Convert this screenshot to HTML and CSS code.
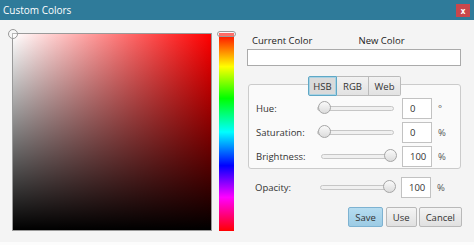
FILE: index.html
```html
<!DOCTYPE html>
<html lang="en">
<head>
  <meta charset="UTF-8" />
  <title>Custom Colors</title>
  <link rel="stylesheet" href="styles.css">
</head>
<body>
  <div class="dialog">
    <div class="titlebar">
      <span class="title">Custom Colors</span>
      <button class="close-btn">x</button>
    </div>

    <div class="content">
      <div class="picker">
        <div class="sv-area">
          <span class="sv-handle"></span>
        </div>
        <div class="hue-bar">
          <span class="hue-handle"></span>
        </div>
      </div>

      <div class="controls">
        <div class="swatch-labels">
          <span>Current Color</span>
          <span>New Color</span>
        </div>
        <div class="swatch-box"></div>

        <div class="group">
          <div class="tabs">
            <button class="tab active">HSB</button>
            <button class="tab">RGB</button>
            <button class="tab">Web</button>
          </div>

          <div class="row">
            <span class="row-label">Hue:</span>
            <div class="slider"><span class="thumb at-min"></span></div>
            <input class="field" type="text" value="0">
            <span class="unit">°</span>
          </div>
          <div class="row">
            <span class="row-label">Saturation:</span>
            <div class="slider"><span class="thumb at-min"></span></div>
            <input class="field" type="text" value="0">
            <span class="unit">%</span>
          </div>
          <div class="row">
            <span class="row-label">Brightness:</span>
            <div class="slider short"><span class="thumb at-max"></span></div>
            <input class="field" type="text" value="100">
            <span class="unit">%</span>
          </div>
        </div>

        <div class="row opacity-row">
          <span class="row-label">Opacity:</span>
          <div class="slider short"><span class="thumb at-max"></span></div>
          <input class="field" type="text" value="100">
          <span class="unit">%</span>
        </div>

        <div class="buttons">
          <button class="btn primary">Save</button>
          <button class="btn">Use</button>
          <button class="btn">Cancel</button>
        </div>
      </div>
    </div>
  </div>
</body>
</html>
```

FILE: styles.css
```css
body {
  margin: 0;
  background: #fcfcfc;
  font-family: 'Open Sans', 'Noto Sans', sans-serif;
  color: #333;
}

.dialog {
  width: 474px;
  height: 242px;
  background: #f4f4f4;
  display: flex;
  flex-direction: column;
}

.titlebar {
  height: 20px;
  background: #2f7b9a;
  display: flex;
  align-items: center;
  justify-content: space-between;
  padding: 0 4px 0 3px;
}

.title {
  color: #fff;
  font-size: 10px;
}

.close-btn {
  width: 14px;
  height: 13px;
  margin-top: 1px;
  padding: 0;
  border: none;
  background: #c9474c;
  color: #fff;
  font-family: inherit;
  font-size: 8px;
  font-weight: bold;
  line-height: 12px;
}

.content {
  display: flex;
  padding: 13px 0 0 12px;
}

.picker {
  display: flex;
}

.sv-area {
  position: relative;
  width: 198px;
  height: 196px;
  border: 1px solid #9a9a9a;
  background:
    linear-gradient(to bottom, rgba(0,0,0,0), #000),
    linear-gradient(to right, #fff, #f00);
}

.sv-handle {
  position: absolute;
  left: -5px;
  top: -5px;
  width: 8px;
  height: 8px;
  border: 1px solid #999;
  border-radius: 50%;
  background: rgba(255,255,255,0.3);
}

.hue-bar {
  position: relative;
  width: 15px;
  height: 198px;
  margin-left: 7px;
  background: linear-gradient(to bottom, #f00, #ff0 17%, #0f0 33%, #0ff 50%, #00f 67%, #f0f 83%, #f00);
}

.hue-handle {
  position: absolute;
  left: -2px;
  top: -2px;
  width: 17px;
  height: 4px;
  border: 1px solid #999;
  border-radius: 3px;
  background: rgba(255,255,255,0.4);
}

.controls {
  width: 214px;
  margin-left: 13px;
  font-size: 9.5px;
}

.swatch-labels {
  display: flex;
  height: 16px;
  line-height: 16px;
  color: #222;
}

.swatch-labels span {
  width: 50%;
  padding-left: 5px;
}

.swatch-labels span + span {
  padding-left: 4px;
}

.swatch-box {
  height: 15px;
  border: 1px solid #aaa;
  background: #fff;
}

.group {
  margin-top: 18px;
  margin-left: 1px;
  height: 83px;
  border: 1px solid #cbcbcb;
  border-radius: 3px;
  background: #fafafa;
  padding: 0 0 0 7px;
}

.tabs {
  display: flex;
  justify-content: center;
  margin: -9px 0 2px -7px;
}

.tab {
  height: 20px;
  padding: 0;
  border: 1px solid #bbb;
  border-left: none;
  background: linear-gradient(#f2f2f2, #e2e2e2);
  font-family: inherit;
  font-size: 9.5px;
  color: #333;
  width: 32px;
}

.tab:first-child {
  border-left: 1px solid #bbb;
  border-radius: 2px 0 0 2px;
}

.tab:last-child {
  border-radius: 0 2px 2px 0;
}

.tab.active {
  width: 29px;
  border: 1px solid #5fa8c6;
  background: #dadada;
  box-shadow: inset 0 0 0 1px #a9d2e3;
}

.row {
  display: flex;
  align-items: center;
  height: 21px;
  margin-bottom: 3px;
}

.row-label {
  width: 61px;
}

.slider {
  position: relative;
  width: 75px;
  height: 3px;
  margin: 0 8px 0 0;
  border: 1px solid #c6c6c6;
  border-radius: 3px;
  background: #f0f0f0;
}

.slider.short {
  width: 71px;
  margin-left: 4px;
}

.thumb {
  position: absolute;
  top: -6px;
  width: 13px;
  height: 13px;
  border: 1px solid #a5a5a5;
  border-radius: 50%;
  box-sizing: border-box;
  background: linear-gradient(#fafafa, #dcdcdc);
}

.thumb.at-min {
  left: 0;
}

.thumb.at-max {
  right: -4px;
}

.field {
  width: 30px;
  height: 21px;
  box-sizing: border-box;
  border: 1px solid #c2c2c2;
  background: #fff;
  padding: 0 0 0 7px;
  font-family: inherit;
  font-size: 9.5px;
  color: #333;
}

.unit {
  margin-left: 6px;
  color: #555;
}

.opacity-row {
  margin: 8px 0 0 8px;
  height: 20px;
}

.buttons {
  display: flex;
  justify-content: flex-end;
  gap: 2px;
  margin-top: 10px;
  margin-right: -1px;
}

.btn {
  height: 20px;
  padding: 0 6px;
  border: 1px solid #b9b9b9;
  border-radius: 2px;
  background: linear-gradient(#f4f4f4, #e0e0e0);
  font-family: inherit;
  font-size: 9.5px;
  color: #333;
}

.btn.primary {
  margin-right: 1px;
  border-color: #7db2d1;
  background: linear-gradient(#b5dcf0, #9ccbe4);
}
```
